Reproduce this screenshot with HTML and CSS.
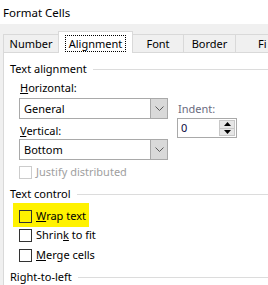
FILE: index.html
```html
<!DOCTYPE html>
<html>
<head>
<meta charset="utf-8">
<link rel="stylesheet" href="styles.css">
</head>
<body>
<div class="title">Format Cells</div>
<div class="dialog">
  <div class="tabs">
    <div class="tab tab-number">Number</div>
    <div class="tab tab-align selected"><span class="focus">Alignment</span></div>
    <div class="tab tab-font">Font</div>
    <div class="tab tab-border">Border</div>
    <div class="tab tab-fill">Fi</div>
  </div>
  <div class="panel">
    <div class="group">Text alignment</div>
    <div class="align-row">
      <div class="col-left">
        <div class="label lbl-h"><u>H</u>orizontal:</div>
        <div class="combo"><span class="combo-text">General</span><span class="combo-btn"><svg width="9" height="5" viewBox="0 0 9 5"><path d="M0.5 0.5 L4.5 4.5 L8.5 0.5" fill="none" stroke="#5a5a5a" stroke-width="1"/></svg></span></div>
        <div class="label lbl-v"><u>V</u>ertical:</div>
        <div class="combo combo-v"><span class="combo-text">Bottom</span><span class="combo-btn"><svg width="9" height="5" viewBox="0 0 9 5"><path d="M0.5 0.5 L4.5 4.5 L8.5 0.5" fill="none" stroke="#5a5a5a" stroke-width="1"/></svg></span></div>
        <div class="check disabled justify"><span class="box"></span><span>Justify distributed</span></div>
      </div>
      <div class="col-right">
        <div class="label indent-lbl">Indent:</div>
        <div class="spin"><span class="spin-text">0</span><span class="spin-btns"><span class="sb"><svg width="7" height="4" viewBox="0 0 7 4"><path d="M3.5 0 L7 4 L0 4 Z" fill="#000"/></svg></span><span class="sb"><svg width="7" height="4" viewBox="0 0 7 4"><path d="M0 0 L7 0 L3.5 4 Z" fill="#000"/></svg></span></span></div>
      </div>
    </div>
    <div class="group group-tc">Text control</div>
    <div class="highlight"><div class="check"><span class="box"></span><span><u>W</u>rap text</span></div></div>
    <div class="check shrink"><span class="box"></span><span>Shrin<u>k</u> to fit</span></div>
    <div class="check merge"><span class="box"></span><span><u>M</u>erge cells</span></div>
    <div class="group group-rtl">Right-to-left</div>
  </div>
</div>
</body>
</html>
```

FILE: styles.css
```css
* { box-sizing: border-box; }
html, body { margin: 0; padding: 0; }
body {
  width: 268px;
  height: 285px;
  overflow: hidden;
  background: #ffffff;
  font-family: "Noto Sans", "Open Sans", sans-serif;
  font-size: 11px;
  color: #000;
}
.title {
  height: 24px;
  padding: 5px 0 0 3px;
  line-height: 16px;
  font-size: 11.5px;
}
.dialog {
  background: #f0f0f0;
  padding-left: 3px;
  height: 261px;
  display: flex;
  flex-direction: column;
}
.tabs {
  flex-shrink: 0;
  height: 28px;
  display: flex;
  align-items: flex-end;
  white-space: nowrap;
}
.tab {
  flex-shrink: 0;
  height: 18px;
  border: 1px solid #d9d9d9;
  border-bottom: none;
  margin-left: -1px;
  background: #f0f0f0;
  text-align: center;
  line-height: 17px;
  overflow: hidden;
}
.tab-number { width: 56px; margin-left: 0; }
.tab.selected {
  width: 75px;
  background: #fff;
  position: relative;
  z-index: 1;
  margin-bottom: -1px;
  height: 22px;
  line-height: 15px;
  padding-top: 3px;
}
.focus {
  border: 1px dotted #000;
  padding: 0 3px;
  display: inline-block;
  line-height: 15px;
}
.tab-font { width: 52px; }
.tab-border { width: 53px; }
.tab-fill { width: 40px; text-align: left; padding-left: 22px; }
.panel {
  flex: 1;
  min-height: 0;
  overflow: hidden;
  background: #fff;
  border-top: 1px solid #d9d9d9;
  border-left: 1px solid #d9d9d9;
  padding-left: 6px;
}
.group {
  display: flex;
  align-items: center;
  line-height: 14px;
  height: 14px;
  margin-top: 9px;
  white-space: nowrap;
}
.group::after {
  content: "";
  flex: 1;
  border-top: 1px solid #dcdcdc;
  margin-left: 6px;
}
.align-row {
  display: flex;
  padding-left: 9px;
}
.col-left { width: 149px; }
.col-right { margin-left: 9px; padding-top: 26px; }
.label { line-height: 14px; height: 14px; padding-left: 1px; }
.lbl-h { margin-top: 5px; }
.lbl-v { margin-top: 5px; }
.combo {
  margin-top: 3px;
  height: 21px;
  border: 1px solid #a9a9a9;
  display: flex;
  background: #fff;
}
.combo-v { margin-top: 1px; }
.combo-text { flex: 1; padding-left: 4px; line-height: 19px; }
.combo-btn {
  width: 17px;
  background: #d9d9d9;
  border-left: 1px solid #a9a9a9;
  display: flex;
  align-items: center;
  justify-content: center;
}
.indent-lbl { color: #6b6b80; }
.spin {
  margin-top: 2px;
  width: 60px;
  height: 20px;
  border: 1px solid #a9a9a9;
  display: flex;
  padding: 1px;
}
.spin-text { flex: 1; padding-left: 2px; line-height: 16px; color: #0a0a40; }
.spin-btns {
  width: 16px;
  display: flex;
  flex-direction: column;
}
.sb {
  flex: 1;
  background: #e6e6e6;
  border: 1px solid #c8c8c8;
  display: flex;
  align-items: center;
  justify-content: center;
}
.sb + .sb { border-top: none; }
.check {
  display: flex;
  align-items: center;
  height: 14px;
  line-height: 14px;
  white-space: nowrap;
}
.box {
  width: 13px;
  height: 13px;
  border: 1px solid #333;
  background: #fff;
  margin-right: 4px;
  flex-shrink: 0;
}
.highlight .box { background: transparent; }
.check.disabled { color: #a0a0a0; }
.check.disabled .box { border-color: #cccccc; }
.justify { margin-top: 5px; }
.group-tc { margin-top: 8px; }
.highlight {
  display: inline-block;
  background: #fff200;
  margin-left: 3px;
  margin-top: 2px;
  padding: 6px 3px 4px 6px;
}
.shrink { margin-left: 9px; margin-top: 1px; }
.merge { margin-left: 9px; margin-top: 6px; }
.group-rtl { margin-top: 8px; }
```
